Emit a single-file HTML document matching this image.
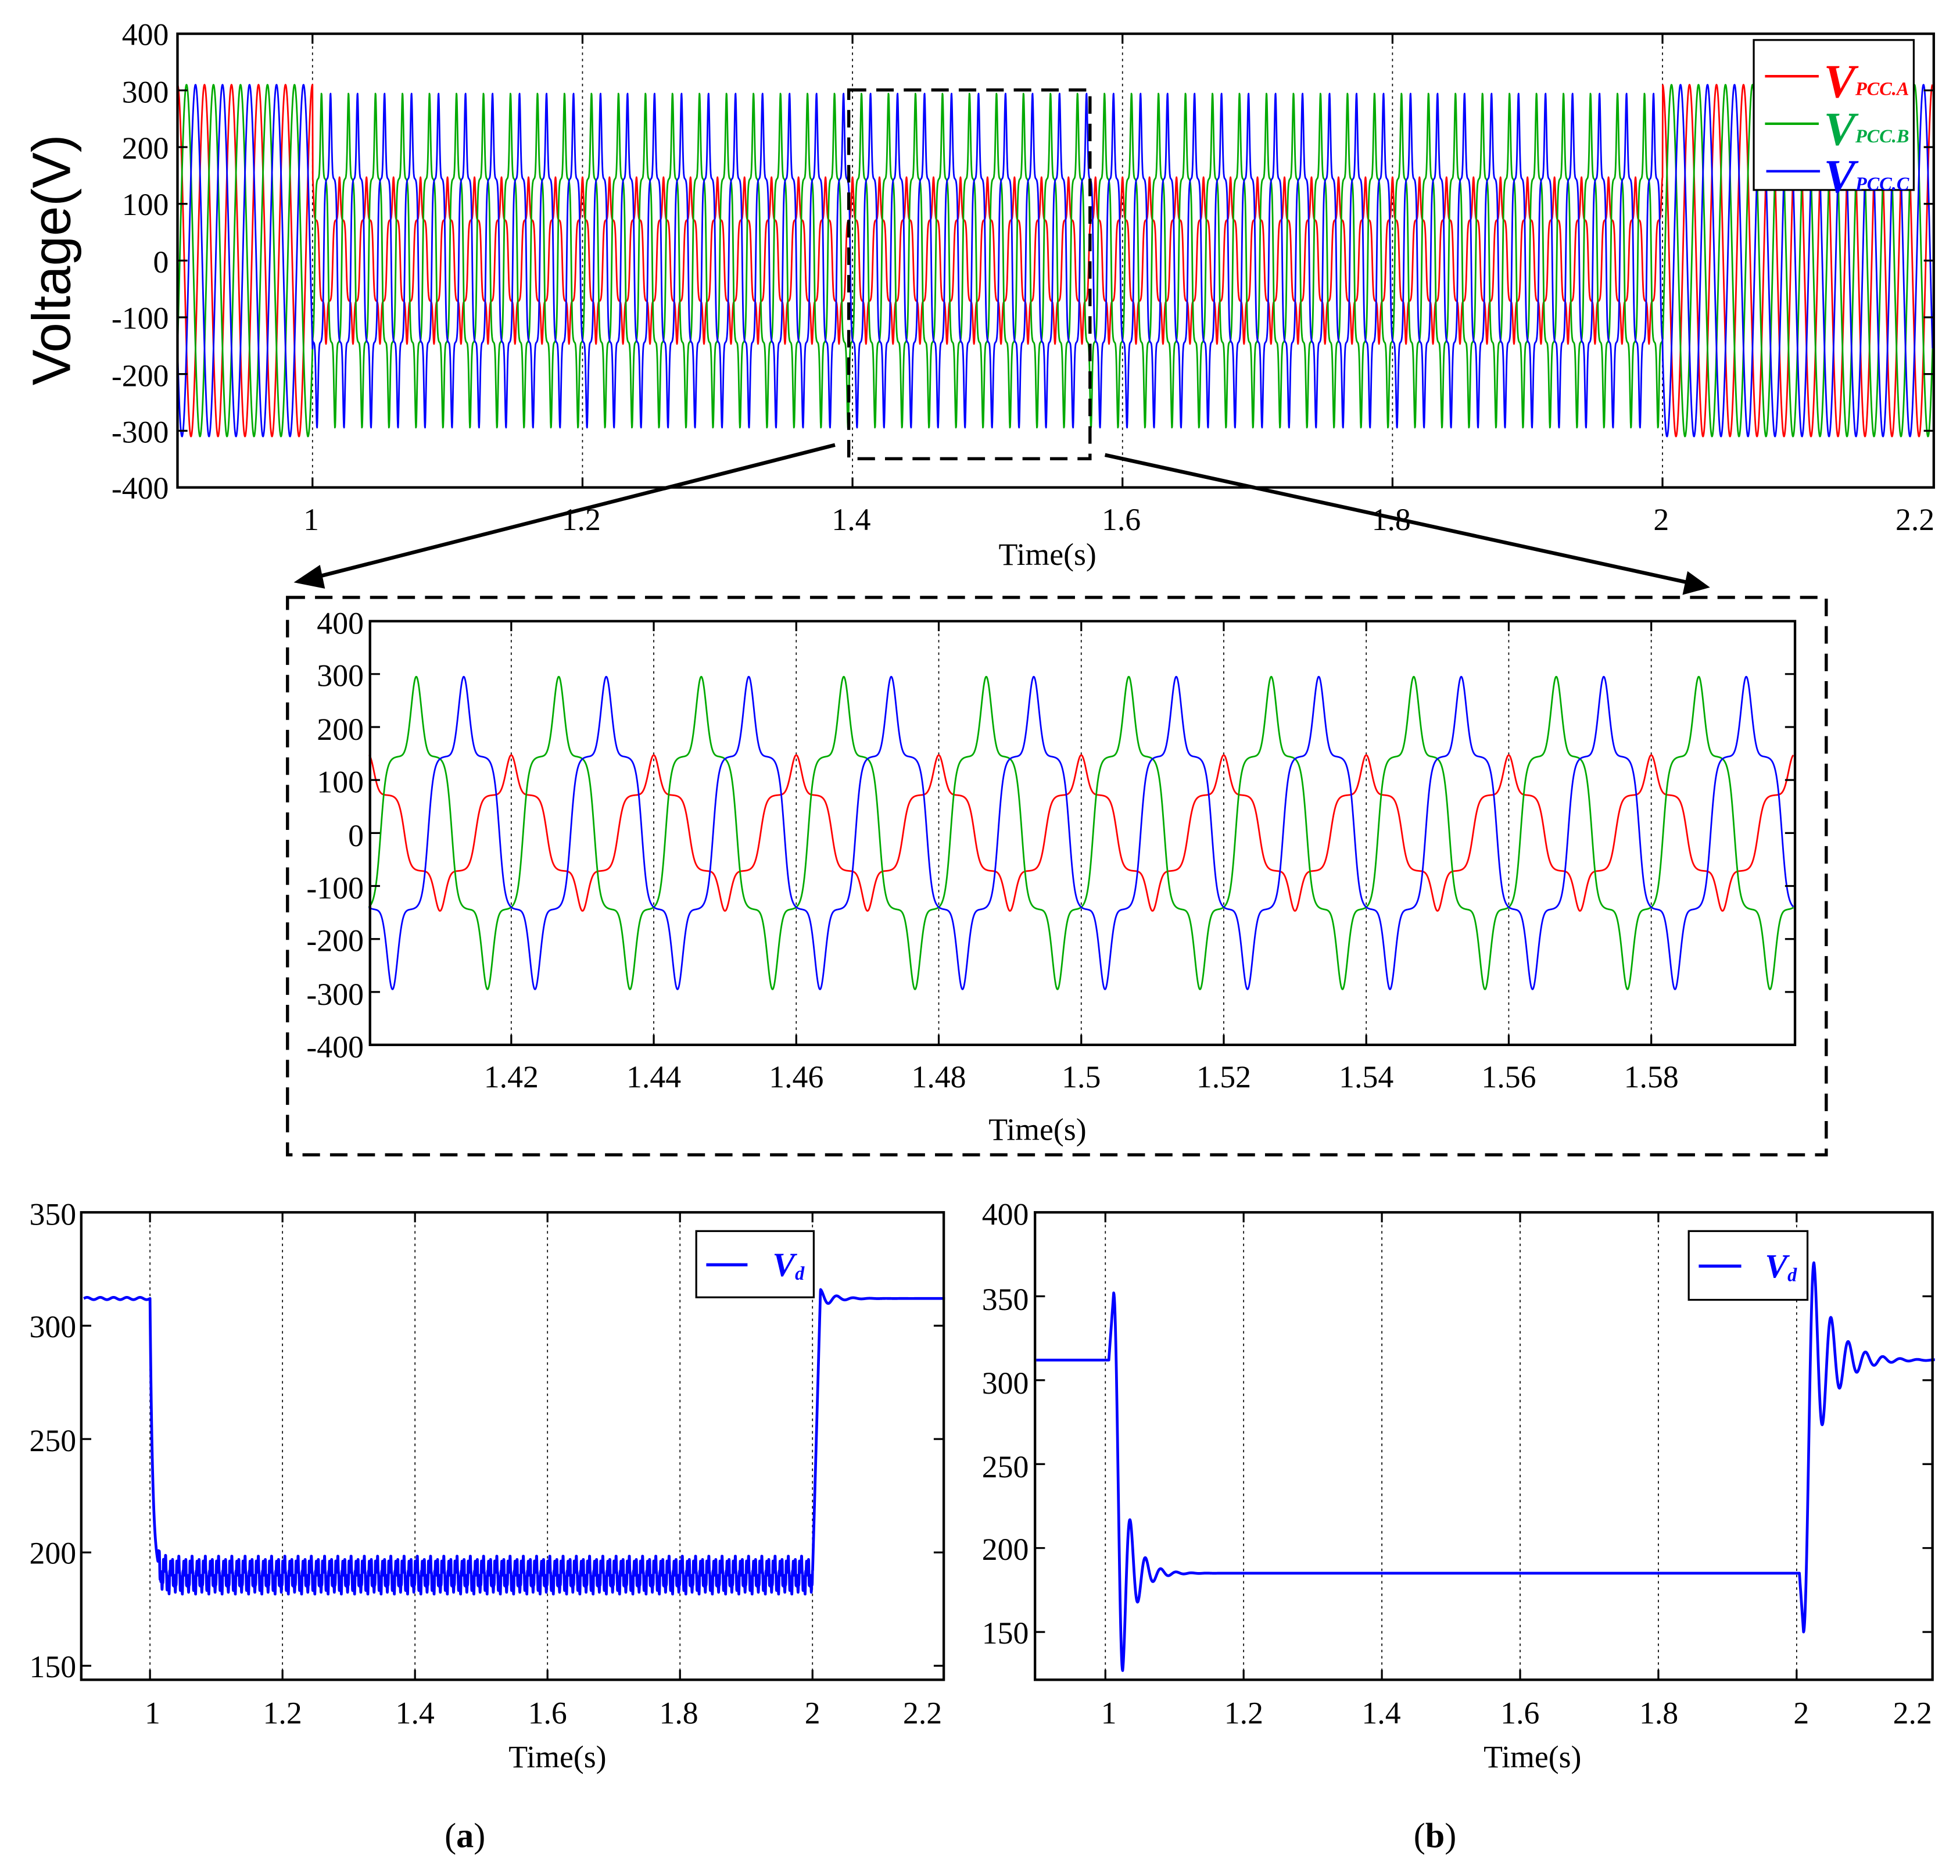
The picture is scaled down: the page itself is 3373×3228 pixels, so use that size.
<!DOCTYPE html>
<html><head><meta charset="utf-8">
<style>
html,body{margin:0;padding:0;background:#fff;}
svg{display:block;}
text{font-family:"Liberation Serif",serif;fill:#000;}
</style></head>
<body>
<svg id="s" width="3373" height="3228" viewBox="0 0 1568 1501" preserveAspectRatio="none" xmlns="http://www.w3.org/2000/svg">
<rect width="1568" height="1501" fill="#fff"/>
<g id="grid" stroke="#000" stroke-width="0.8" stroke-dasharray="2,3" fill="none"></g>
<g id="waves" fill="none" stroke-linejoin="round"></g>
<g id="ticks" stroke="#000" stroke-width="1.5"></g>
<!-- frames -->
<rect x="142" y="27" width="1405" height="363" fill="none" stroke="#000" stroke-width="2"/>
<rect x="296" y="497" width="1140" height="339" fill="none" stroke="#000" stroke-width="2"/>
<rect x="65" y="970" width="690" height="374" fill="none" stroke="#000" stroke-width="2"/>
<rect x="828" y="970" width="718" height="374" fill="none" stroke="#000" stroke-width="2"/>
<!-- dashed boxes -->
<rect x="679" y="72" width="193" height="295" fill="none" stroke="#000" stroke-width="2.5" stroke-dasharray="14,8"/>
<rect x="230" y="478" width="1231" height="446" fill="none" stroke="#000" stroke-width="2.5" stroke-dasharray="14,8"/>
<!-- arrows -->
<line x1="668" y1="356" x2="252" y2="462" stroke="#000" stroke-width="3"/>
<polygon points="235,466 256,452 260,471" fill="#000"/>
<line x1="884" y1="364" x2="1350" y2="466" stroke="#000" stroke-width="3"/>
<polygon points="1368,470 1346,476 1350,457" fill="#000"/>
<!-- legends -->
<rect x="1403" y="32" width="128" height="120" fill="#fff" stroke="#000" stroke-width="1.5"/>
<line x1="1412" y1="61" x2="1455" y2="61" stroke="#f00" stroke-width="2"/>
<line x1="1412" y1="99" x2="1455" y2="99" stroke="#0a0" stroke-width="2"/>
<line x1="1413" y1="137" x2="1456" y2="137" stroke="#00f" stroke-width="2"/>
<text x="1459" y="78" font-size="38" font-weight="bold" font-style="italic" style="fill:#f00">V<tspan font-size="15" dy="-2">PCC.A</tspan></text>
<text x="1459" y="116" font-size="38" font-weight="bold" font-style="italic" style="fill:#0a4">V<tspan font-size="15" dy="-2">PCC.B</tspan></text>
<text x="1459" y="154" font-size="38" font-weight="bold" font-style="italic" style="fill:#00f">V<tspan font-size="15" dy="-2">PCC.C</tspan></text>
<rect x="557" y="985" width="94" height="53" fill="#fff" stroke="#000" stroke-width="1.5"/>
<line x1="565" y1="1012" x2="598" y2="1012" stroke="#00f" stroke-width="2.5"/>
<text x="618" y="1021" font-size="27" font-weight="bold" font-style="italic" style="fill:#00f">V<tspan font-size="15" dy="3">d</tspan></text>
<rect x="1351" y="985" width="95" height="55" fill="#fff" stroke="#000" stroke-width="1.5"/>
<line x1="1359" y1="1013" x2="1393" y2="1013" stroke="#00f" stroke-width="2.5"/>
<text x="1412" y="1022" font-size="27" font-weight="bold" font-style="italic" style="fill:#00f">V<tspan font-size="15" dy="3">d</tspan></text>
<!-- top axis labels -->
<g font-size="25" text-anchor="end">
<text x="135" y="36">400</text><text x="135" y="82">300</text><text x="135" y="127">200</text><text x="135" y="172">100</text><text x="135" y="218">0</text><text x="135" y="263">-100</text><text x="135" y="309">-200</text><text x="135" y="354">-300</text><text x="135" y="399">-400</text>
</g>
<g font-size="25" text-anchor="middle">
<text x="249" y="424">1</text><text x="465" y="424">1.2</text><text x="681" y="424">1.4</text><text x="897" y="424">1.6</text><text x="1113" y="424">1.8</text><text x="1329" y="424">2</text><text x="1532" y="424">2.2</text>
<text x="838" y="452">Time(s)</text>
</g>
<text x="56" y="208" font-size="43" text-anchor="middle" transform="rotate(-90 56 208)" style="font-family:'Liberation Sans',sans-serif">Voltage(V)</text>
<!-- zoom labels -->
<g font-size="25" text-anchor="end">
<text x="291" y="507">400</text><text x="291" y="549">300</text><text x="291" y="592">200</text><text x="291" y="634">100</text><text x="291" y="677">0</text><text x="291" y="719">-100</text><text x="291" y="761">-200</text><text x="291" y="804">-300</text><text x="291" y="846">-400</text>
</g>
<g font-size="25" text-anchor="middle">
<text x="409" y="870">1.42</text><text x="523" y="870">1.44</text><text x="637" y="870">1.46</text><text x="751" y="870">1.48</text><text x="865" y="870">1.5</text><text x="979" y="870">1.52</text><text x="1093" y="870">1.54</text><text x="1207" y="870">1.56</text><text x="1321" y="870">1.58</text>
<text x="830" y="912">Time(s)</text>
</g>
<!-- (a) labels -->
<g font-size="25" text-anchor="end">
<text x="61" y="980">350</text><text x="61" y="1070">300</text><text x="61" y="1161">250</text><text x="61" y="1251">200</text><text x="61" y="1342">150</text>
</g>
<g font-size="25" text-anchor="middle">
<text x="122" y="1379">1</text><text x="226" y="1379">1.2</text><text x="332" y="1379">1.4</text><text x="438" y="1379">1.6</text><text x="543" y="1379">1.8</text><text x="650" y="1379">2</text><text x="738" y="1379">2.2</text>
<text x="446" y="1414">Time(s)</text>
</g>
<!-- (b) labels -->
<g font-size="25" text-anchor="end">
<text x="823" y="980">400</text><text x="823" y="1048">350</text><text x="823" y="1115">300</text><text x="823" y="1182">250</text><text x="823" y="1248">200</text><text x="823" y="1315">150</text>
</g>
<g font-size="25" text-anchor="middle">
<text x="887" y="1379">1</text><text x="995" y="1379">1.2</text><text x="1105" y="1379">1.4</text><text x="1216" y="1379">1.6</text><text x="1327" y="1379">1.8</text><text x="1441" y="1379">2</text><text x="1530" y="1379">2.2</text>
<text x="1226" y="1414">Time(s)</text>
</g>
<text x="372" y="1478" font-size="28" text-anchor="middle">(<tspan font-weight="bold">a</tspan>)</text>
<text x="1148" y="1478" font-size="28" text-anchor="middle">(<tspan font-weight="bold">b</tspan>)</text>
</svg>
<script>
(function(){
var NS="http://www.w3.org/2000/svg";
function el(g,tag,a){var e=document.createElementNS(NS,tag);for(var k in a)e.setAttribute(k,a[k]);document.getElementById(g).appendChild(e);return e;}
function path(g,pts,col,w){var d="M"+pts.map(function(p){return p[0].toFixed(2)+","+p[1].toFixed(2)}).join("L");el(g,"path",{d:d,stroke:col,"stroke-width":w});}
var W=2*Math.PI*50,T4=Math.tanh(4);
function sag(s,a,b){return a*Math.tanh(4*s)/T4+b*(s<0?-1:1)*Math.pow(Math.abs(s),20);}
function ph(t,k,full){var s=Math.cos(W*t-k*2*Math.PI/3);
 if(!full){return k==0?sag(s,72,75):sag(s,145,150);}
 return 310*s;}
function volt(t,k){var full=(t<1||t>=2);return ph(t,k,full);}
var cols=["#f00","#0a0","#00f"];
for(var k=0;k<3;k++){var p=[];for(var t=0.9;t<=2.2;t+=0.0002){p.push([142+(t-0.9)*1080,208.5-volt(t,k)*0.454]);}path("waves",p,cols[k],1.3);}
for(var k=0;k<3;k++){var p=[];for(var t=1.4;t<=1.6;t+=0.00005){p.push([295+(t-1.4)*5700,666.5-volt(t,k)*0.424]);}path("waves",p,cols[k],1.3);}
function va(t){if(t<1)return 312+0.5*Math.sin(W*t);
 if(t<2){var base=190+122*Math.exp(-(t-1)/0.004);var r=(t>1.012?5*Math.sin(2*W*t)+3*Math.sin(6*W*t+0.7)+2*Math.sin(13*W*t):0);return base+r;}
 if(t<2.012)return 190+125*(t-2)/0.012;
 return 312+4*Math.exp(-(t-2.012)/0.02)*Math.cos(2*Math.PI*40*(t-2.012));}
var p=[];for(var t=0.9;t<=2.2;t+=0.0002){p.push([67+(t-0.9)*530,970+(350-va(t))*1.814]);}path("waves",p,"#00f",2.2);
function vb(t){if(t<1.005)return 312;
 if(t<1.012)return 312+40*(t-1.005)/0.007;
 if(t<1.025){var u=(t-1.012)/0.013;return 352-225*(1-Math.cos(Math.PI*u))/2;}
 if(t<2.004)return 185-58*Math.exp(-(t-1.025)/0.018)*Math.cos(2*Math.PI*45*(t-1.025));
 if(t<2.01)return 185-35*(t-2.004)/0.006;
 if(t<2.025){var u=(t-2.01)/0.015;return 150+220*(1-Math.cos(Math.PI*u))/2;}
 return 312+58*Math.exp(-(t-2.025)/0.03)*Math.cos(2*Math.PI*40*(t-2.025));}
var p=[];for(var t=0.9;t<=2.2;t+=0.0005){p.push([829+(t-0.9)*553,970+(400-vb(t))*1.343]);}path("waves",p,"#00f",2.2);
[1,1.2,1.4,1.6,1.8,2].forEach(function(t){var x=142+(t-0.9)*1080;el("grid","line",{x1:x,y1:27,x2:x,y2:390});el("ticks","line",{x1:x,y1:390,x2:x,y2:382});el("ticks","line",{x1:x,y1:27,x2:x,y2:35});});
for(var v=-300;v<=300;v+=100){var y=208.5-v*0.454;el("ticks","line",{x1:142,y1:y,x2:150,y2:y});el("ticks","line",{x1:1547,y1:y,x2:1539,y2:y});}
for(var i=1;i<10;i++){var x=295+i*114;el("grid","line",{x1:x,y1:497,x2:x,y2:836});el("ticks","line",{x1:x,y1:836,x2:x,y2:828});el("ticks","line",{x1:x,y1:497,x2:x,y2:505});}
for(var v=-300;v<=300;v+=100){var y=666.5-v*0.424;el("ticks","line",{x1:296,y1:y,x2:304,y2:y});el("ticks","line",{x1:1436,y1:y,x2:1428,y2:y});}
[1,1.2,1.4,1.6,1.8,2].forEach(function(t){var x=67+(t-0.9)*530;el("grid","line",{x1:x,y1:970,x2:x,y2:1344});el("ticks","line",{x1:x,y1:1344,x2:x,y2:1336});el("ticks","line",{x1:x,y1:970,x2:x,y2:978});});
[1,1.2,1.4,1.6,1.8,2].forEach(function(t){var x=829+(t-0.9)*553;el("grid","line",{x1:x,y1:970,x2:x,y2:1344});el("ticks","line",{x1:x,y1:1344,x2:x,y2:1336});el("ticks","line",{x1:x,y1:970,x2:x,y2:978});});
[300,250,200,150].forEach(function(v){var y=970+(350-v)*1.814;el("ticks","line",{x1:65,y1:y,x2:73,y2:y});el("ticks","line",{x1:755,y1:y,x2:747,y2:y});});
[350,300,250,200,150].forEach(function(v){var y=970+(400-v)*1.343;el("ticks","line",{x1:828,y1:y,x2:836,y2:y});el("ticks","line",{x1:1546,y1:y,x2:1538,y2:y});});
})();
</script>
</body></html>
